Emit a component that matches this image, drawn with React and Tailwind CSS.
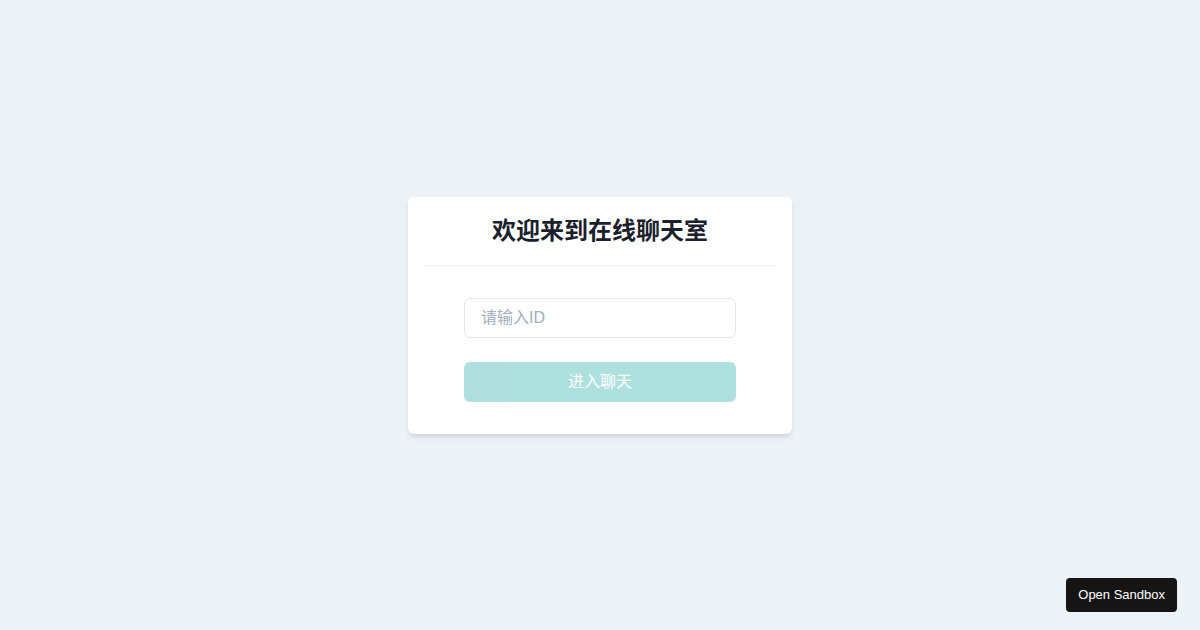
import React, { useState } from 'react';

export default function App() {
    const [userId, setUserId] = useState('');
    const disabled = userId.trim() === '';

    return (
        <div className="min-h-screen w-full bg-[#edf2f7] flex items-center justify-center font-['Liberation_Sans','Noto_Sans_CJK_SC',sans-serif]">
            <div className="w-96 bg-white rounded-md shadow-md px-4">
                {/* Header */}
                <div className="pt-[18px] pb-[18px] border-b border-[#edf2f7] text-center">
                    <h1 className="text-2xl leading-8 font-bold text-[#1a202c]">欢迎来到在线聊天室</h1>
                </div>

                {/* Form */}
                <div className="w-[272px] mx-auto pt-8 pb-8 flex flex-col gap-6">
                    <input
                        type="text"
                        value={userId}
                        onChange={(e) => setUserId(e.target.value)}
                        placeholder="请输入ID"
                        className="h-10 w-full px-4 rounded-md border border-[#e2e8f0] text-base text-[#2d3748] placeholder:text-[#a0aec0] outline-none"
                    />
                    <button
                        disabled={disabled}
                        className={`h-10 w-full rounded-md bg-[#38b2ac] text-white text-base ${disabled ? 'opacity-40' : ''}`}
                    >
                        进入聊天
                    </button>
                </div>
            </div>

            {/* Sandbox button */}
            <div className="fixed right-[23px] bottom-[18px] h-[34px] px-3 flex items-center rounded bg-[#151515] text-white text-[13px]">
                Open Sandbox
            </div>
        </div>
    );
}
